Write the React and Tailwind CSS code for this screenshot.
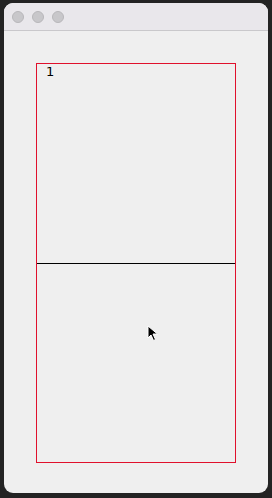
export default function App() {
  return (
    <div className="h-[498px] w-[272px] bg-[#232323] pt-[3px] pl-[4px]" style={{ fontFamily: '"DejaVu Sans", "Liberation Sans", sans-serif' }}>
      <div className="relative w-[264px] h-[490px] rounded-[9px] overflow-hidden bg-[#efefef] flex flex-col">
        <div className="h-[28px] shrink-0 bg-[#e9e7eb] border-b border-[#c9c8cb] flex items-center gap-[8px] pl-[8px]">
          <span className="w-[12px] h-[12px] rounded-full bg-[#c8c7ca] border border-[#b8b7ba]" />
          <span className="w-[12px] h-[12px] rounded-full bg-[#c8c7ca] border border-[#b8b7ba]" />
          <span className="w-[12px] h-[12px] rounded-full bg-[#c8c7ca] border border-[#b8b7ba]" />
        </div>
        <div className="pl-[32px] pt-[32px]">
          <div className="w-[200px] h-[400px] border border-[#e0102c] flex flex-col">
            <div className="flex-1 pl-[9px] text-[13px] leading-[15px] text-black">1</div>
            <div className="flex-1 border-t border-black" />
          </div>
        </div>
        <svg className="absolute left-[143px] top-[322px]" width="12" height="17" viewBox="0 0 12 17">
          <path d="M1 1 L1 13 L4 10 L6.5 15.5 L8.5 14.5 L6 9 L10.5 9 Z" fill="#000" stroke="#fff" strokeWidth="1" strokeLinejoin="round" />
        </svg>
      </div>
    </div>
  );
}
